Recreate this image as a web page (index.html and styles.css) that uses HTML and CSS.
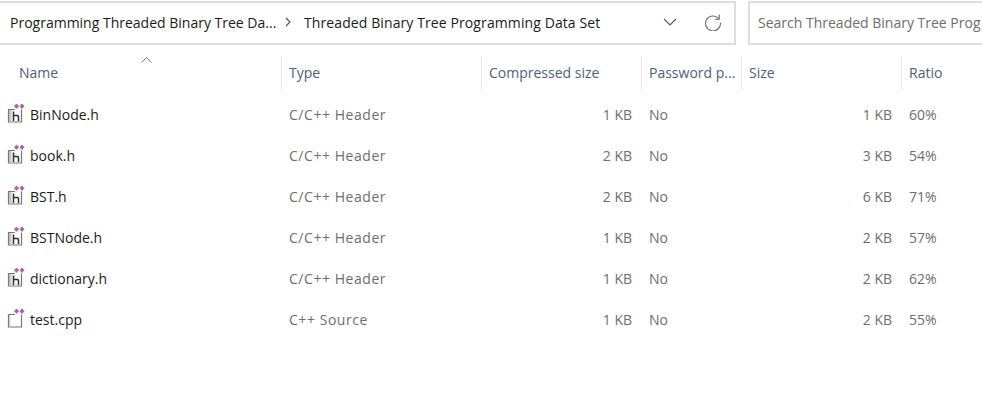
FILE: index.html
```html
<!DOCTYPE html>
<html lang="en">
<head>
  <meta charset="UTF-8">
  <title>Threaded Binary Tree Programming Data Set</title>
  <link rel="stylesheet" href="styles.css">
</head>
<body>
  <svg width="0" height="0" class="defs">
    <symbol id="icon-h" viewBox="0 0 18 20">
      <path d="M8 6.500H1.500v12.500h13V6.500" fill="none" stroke="#777" stroke-width="1.200"/>
      <path d="M2 7h2.500v11.500H2z" fill="#c4c4c4"/>
      <path d="M6.500 8.500v9.500M6.500 12.500h3.800a1.200 1.200 0 0 1 1.200 1.200V18" fill="none" stroke="#2e2e2e" stroke-width="1.500"/>
      <path d="M8.500 1h2v1.200h1.200v2H10.500v1.200h-2V4.200H7.300v-2h1.200zM14 1h2v1.200h1.200v2H16v1.200h-2V4.200h-1.200v-2H14z" fill="#a9649f"/>
    </symbol>
    <symbol id="icon-cpp" viewBox="0 0 18 20">
      <path d="M8 6.500H1.500v12.500h13V6.500" fill="none" stroke="#777" stroke-width="1.200"/>
      <path d="M2 7h1.500v11.500H2z" fill="#d4d4d4"/>
      <path d="M8.500 1h2v1.200h1.200v2H10.500v1.200h-2V4.200H7.300v-2h1.200zM14 1h2v1.200h1.200v2H16v1.200h-2V4.200h-1.200v-2H14z" fill="#a9649f"/>
    </symbol>
  </svg>

  <!-- Address and search -->
  <div class="toolbar">
    <div class="address">
      <div class="crumbs">
        <span class="crumb-first">Programming Threaded Binary Tree Da...</span>
        <svg class="crumb-sep" width="8" height="10" viewBox="0 0 8 10"><path d="M2 1l4 4-4 4" fill="none" stroke="#555" stroke-width="1.200"/></svg>
        <span class="crumb-last">Threaded Binary Tree Programming Data Set</span>
      </div>
      <svg class="chevron" width="14" height="8" viewBox="0 0 14 8"><path d="M1 1l6 6 6-6" fill="none" stroke="#555" stroke-width="1.100"/></svg>
      <svg class="refresh" width="18" height="18" viewBox="0 0 18 18"><path d="M11 6.200h4.200V1.500M14.500 5.300A7.500 7.500 0 1 0 16.500 9.700" fill="none" stroke="#6a6a6a" stroke-width="1.100"/></svg>
    </div>
    <div class="search">Search Threaded Binary Tree Prog</div>
  </div>

  <!-- File list -->
  <div class="list">
    <div class="list-head">
      <div class="col-head col-name">Name
        <svg class="sort" width="11" height="6" viewBox="0 0 11 6"><path d="M.5 5.500l5-5 5 5" fill="none" stroke="#777" stroke-width="1"/></svg>
      </div>
      <div class="col-head">Type</div>
      <div class="col-head">Compressed size</div>
      <div class="col-head">Password p...</div>
      <div class="col-head">Size</div>
      <div class="col-head last">Ratio</div>
    </div>

    <div class="row">
      <div class="name"><svg class="icon"><use href="#icon-h"/></svg>BinNode.h</div>
      <div class="cell type">C/C++ Header</div><div class="cell num">1 KB</div><div class="cell">No</div><div class="cell num">1 KB</div><div class="cell">60%</div>
    </div>
    <div class="row">
      <div class="name"><svg class="icon"><use href="#icon-h"/></svg>book.h</div>
      <div class="cell type">C/C++ Header</div><div class="cell num">2 KB</div><div class="cell">No</div><div class="cell num">3 KB</div><div class="cell">54%</div>
    </div>
    <div class="row">
      <div class="name"><svg class="icon"><use href="#icon-h"/></svg>BST.h</div>
      <div class="cell type">C/C++ Header</div><div class="cell num">2 KB</div><div class="cell">No</div><div class="cell num">6 KB</div><div class="cell">71%</div>
    </div>
    <div class="row">
      <div class="name"><svg class="icon"><use href="#icon-h"/></svg>BSTNode.h</div>
      <div class="cell type">C/C++ Header</div><div class="cell num">1 KB</div><div class="cell">No</div><div class="cell num">2 KB</div><div class="cell">57%</div>
    </div>
    <div class="row">
      <div class="name"><svg class="icon"><use href="#icon-h"/></svg>dictionary.h</div>
      <div class="cell type">C/C++ Header</div><div class="cell num">1 KB</div><div class="cell">No</div><div class="cell num">2 KB</div><div class="cell">62%</div>
    </div>
    <div class="row">
      <div class="name"><svg class="icon"><use href="#icon-cpp"/></svg>test.cpp</div>
      <div class="cell type">C++ Source</div><div class="cell num">1 KB</div><div class="cell">No</div><div class="cell num">2 KB</div><div class="cell">55%</div>
    </div>
  </div>
</body>
</html>
```

FILE: styles.css
```css
html, body {
  overflow: hidden;
}

body {
  font-family: "Open Sans", "Noto Sans", sans-serif;
  font-size: 14px;
  background-color: #fff;
  color: #1a1a1a;
  margin: 0;
  padding: 0;
  height: 412px;
}

.defs {
  display: block;
  height: 0;
}

/* Toolbar */
.toolbar {
  display: flex;
  gap: 12px;
  height: 44px;
  margin-top: 1px;
}

.address {
  display: flex;
  align-items: center;
  width: 736px;
  box-sizing: border-box;
  border: 2px solid #dedede;
  border-left: none;
  padding: 0 0 2px 10px;
}

.crumbs {
  display: flex;
  align-items: center;
  flex: 1;
  white-space: nowrap;
}

.crumb-first {
  width: 274px;
}

.crumb-last {
  letter-spacing: 0.1px;
}

.crumb-sep {
  margin-right: 12px;
}

.chevron {
  margin-right: 27px;
}

.refresh {
  margin-right: 12px;
}

.search {
  flex: 1;
  box-sizing: border-box;
  border: 2px solid #dedede;
  border-right: none;
  padding-left: 8px;
  line-height: 40px;
  color: #6d6d6d;
  white-space: nowrap;
  overflow: hidden;
}

/* File list */
.list-head, .row {
  display: grid;
  grid-template-columns: 281px 200px 160px 100px 160px 81px;
}

.list-head {
  margin-top: 11px;
  height: 32px;
}

.col-head {
  position: relative;
  border-left: 1px solid #e5e5e5;
  padding-left: 7px;
  line-height: 34px;
  color: #4c607a;
}

.col-name {
  border-left: none;
  padding-left: 19px;
}

.sort {
  position: absolute;
  left: 141px;
  top: 1px;
}

.row {
  height: 41px;
  line-height: 41px;
}

.list-head + .row {
  margin-top: 6px;
}

.name {
  display: flex;
  align-items: center;
  gap: 5px;
  padding-left: 7px;
}

.icon {
  width: 18px;
  height: 20px;
  margin-top: -4px;
}

.cell {
  padding-left: 8px;
  color: #6d6d6d;
}

.type {
  letter-spacing: 0.55px;
}

.num {
  padding: 0 9px 0 0;
  text-align: right;
}
```
